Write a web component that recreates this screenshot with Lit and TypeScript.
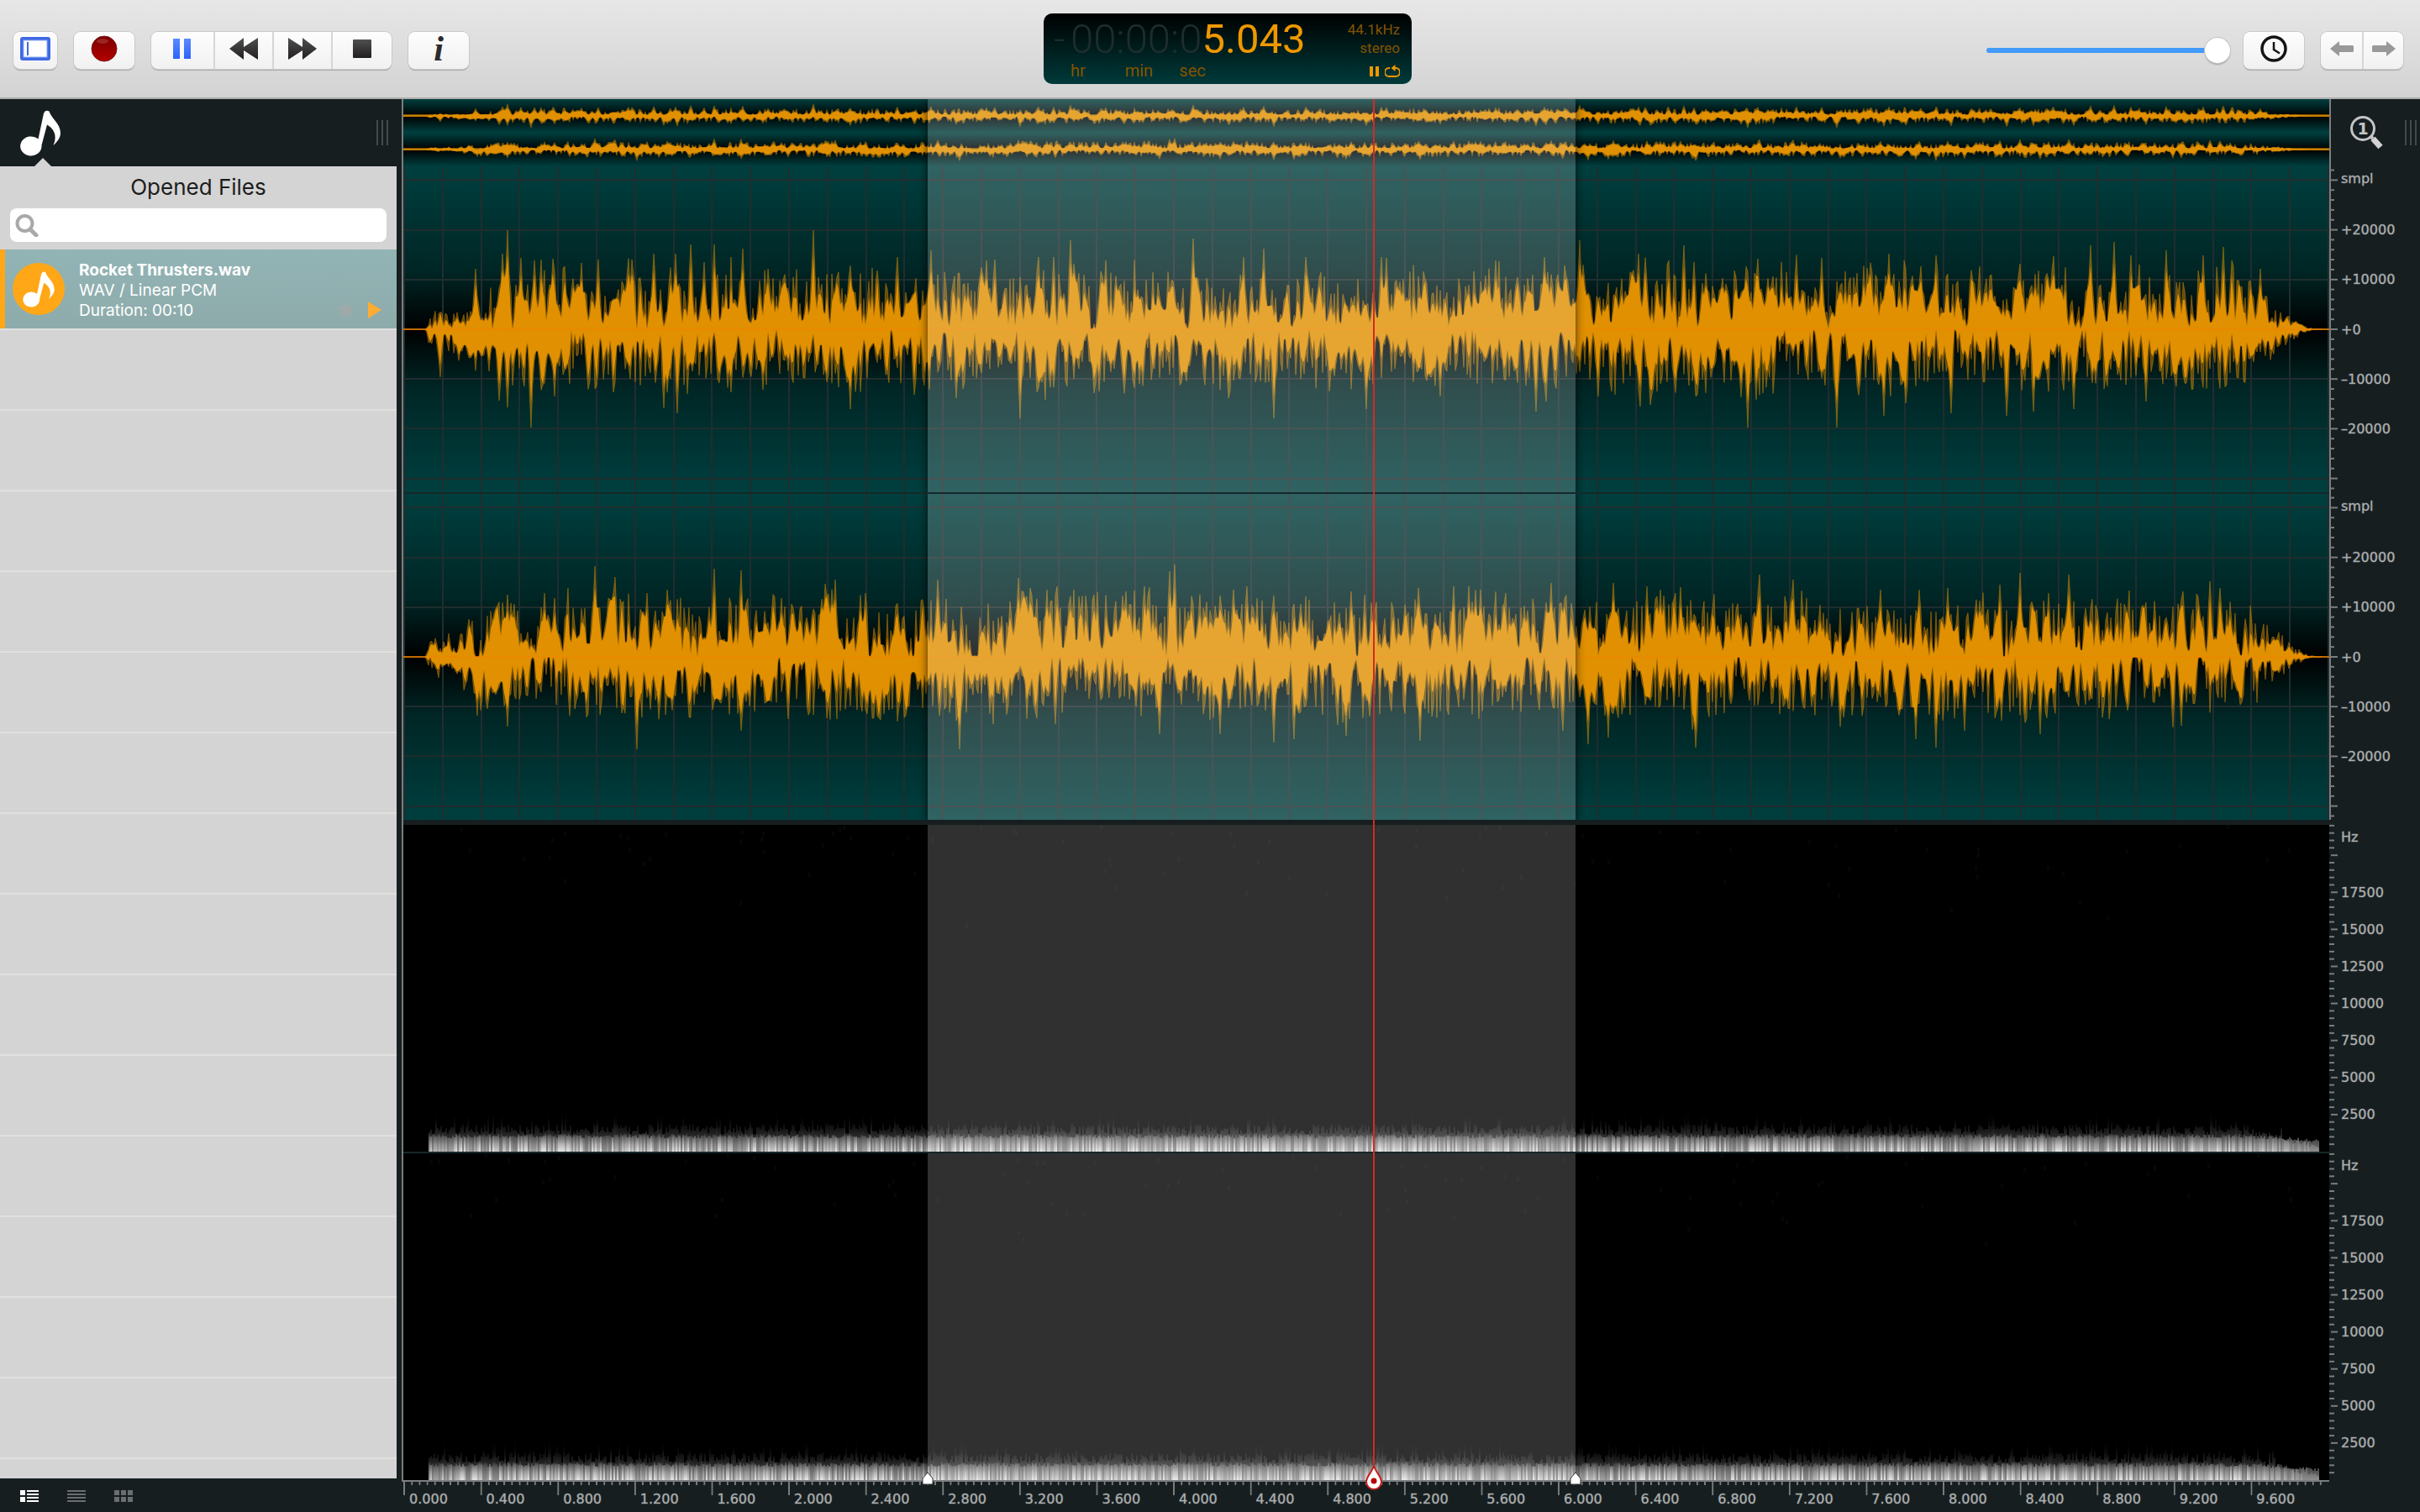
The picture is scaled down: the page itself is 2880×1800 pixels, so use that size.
import { LitElement, html, svg, css } from "lit";
import { customElement, property } from "lit/decorators.js";

type Peak = [number, number];

const WIDTH = 2292;
const DURATION = 10.009;
const MAX_SAMPLE = 32768;
const NYQUIST = 22050;

const FIRST_TOP: Peak[] = [
  [85, 72], [117, 90], [123, 118], [139, 85], [155, 82], [163, 83], [177, 84], [191, 75], [211, 79], [231, 83],
  [271, 83], [298, 90], [323, 90], [341, 101], [357, 80], [369, 101], [403, 96], [433, 72], [487, 118], [587, 86],
  [627, 94], [693, 82], [703, 83], [755, 86], [773, 86], [793, 106], [836, 82], [939, 108], [999, 86], [1023, 96],
  [1073, 86], [1163, 86], [1169, 85], [1299, 82], [1358, 86], [1399, 106], [1469, 90], [1505, 82], [1523, 100],
  [1535, 80], [1611, 84], [1687, 85], [1768, 90], [1824, 88], [1923, 78], [2008, 100], [2035, 104], [2055, 88],
  [2097, 94], [2141, 88], [2165, 98], [2176, 82], [2209, 72],
];
const FIRST_BOTTOM: Peak[] = [
  [43, 57], [113, 85], [123, 93], [151, 117], [179, 80], [249, 75], [309, 94], [325, 100], [389, 75], [428, 72],
  [531, 95], [607, 78], [657, 82], [733, 106], [821, 76], [981, 82], [1035, 106], [1145, 95], [1233, 80], [1347, 98],
  [1359, 86], [1422, 80], [1471, 92], [1483, 90], [1537, 80], [1599, 117], [1609, 84], [1705, 117], [1761, 103],
  [1787, 88], [1842, 100], [1907, 103], [1939, 98], [1987, 95], [2073, 86],
];
const SECOND_TOP: Peak[] = [
  [123, 74], [179, 70], [227, 108], [251, 95], [290, 76], [313, 80], [370, 105], [402, 103], [449, 70], [501, 87],
  [513, 92], [549, 76], [635, 92], [732, 94], [745, 82], [765, 80], [777, 84], [821, 74], [881, 84], [911, 102],
  [917, 110], [971, 73], [1003, 84], [1035, 73], [1127, 78], [1207, 82], [1250, 84], [1281, 80], [1365, 88],
  [1439, 88], [1479, 84], [1496, 80], [1519, 83], [1613, 98], [1653, 92], [1757, 80], [1803, 80], [1837, 82],
  [1899, 86], [1923, 100], [1958, 76], [1981, 98], [2117, 78], [2149, 90], [2161, 82],
];
const SECOND_BOTTOM: Peak[] = [
  [87, 70], [124, 83], [198, 70], [277, 110], [340, 72], [402, 88], [457, 74], [563, 70], [661, 110], [775, 80],
  [899, 92], [971, 92], [1035, 102], [1059, 98], [1121, 94], [1209, 100], [1379, 88], [1410, 104], [1433, 96],
  [1537, 108], [1799, 98], [1823, 108], [1857, 88], [1902, 76], [1947, 92], [2105, 84], [2115, 82],
];

function randomSource(seed: number) {
  let state = seed;
  return () => {
    state = (state * 1664525 + 1013904223) >>> 0;
    return state / 4294967296;
  };
}

const ENVELOPE: Peak[] = [
  [0, 0], [27, 0], [30, 0.35], [60, 0.42], [90, 0.8], [120, 1], [2190, 1], [2212, 0.7], [2232, 0.4], [2248, 0.22],
  [2262, 0.06], [2274, 0.01], [WIDTH, 0],
];

function envelopeAt(x: number) {
  for (let i = 1; i < ENVELOPE.length; i++) {
    const [x1, y1] = ENVELOPE[i];
    if (x <= x1) {
      const [x0, y0] = ENVELOPE[i - 1];
      return y0 + ((x - x0) / (x1 - x0)) * (y1 - y0);
    }
  }
  return 0;
}

const STEP = 2;
const COUNT = WIDTH / STEP;

function sideLevels(seed: number, peaks: Peak[]) {
  const random = randomSource(seed);
  const levels: number[] = [];
  let drift = 0;
  for (let i = 0; i <= COUNT; i++) {
    drift = drift * 0.85 + (random() - 0.5) * 14;
    const crest = random() < 0.42;
    const base = crest ? 40 + random() * 32 : 6 + random() * 36;
    levels.push(Math.max(0, base + drift) * envelopeAt(i * STEP));
  }
  for (const [x, height] of peaks) {
    const i = Math.round(x / STEP);
    levels[i] = height;
    levels[i - 1] = Math.max(levels[i - 1], height * 0.62);
    levels[i + 1] = Math.max(levels[i + 1], height * 0.56);
  }
  return levels;
}

function coreLevels(levels: number[]) {
  return levels.map((v, i) => {
    const low = Math.min(levels[i - 1] ?? v, v, levels[i + 1] ?? v);
    return low + (v - low) * 0.45;
  });
}

function outline(top: number[], bottom: number[], middle: number, scale: number) {
  const upper = top.map((v, i) => `${i * STEP} ${(middle - v * scale).toFixed(1)}`);
  const lower = bottom.map((v, i) => `${i * STEP} ${(middle + v * scale).toFixed(1)}`).reverse();
  return `M${upper.join("L")}L${lower.join("L")}Z`;
}

const CHANNELS = [
  { top: sideLevels(11, FIRST_TOP), bottom: sideLevels(29, FIRST_BOTTOM) },
  { top: sideLevels(47, SECOND_TOP), bottom: sideLevels(83, SECOND_BOTTOM) },
].map((c) => ({ ...c, coreTop: coreLevels(c.top), coreBottom: coreLevels(c.bottom) }));

const percent = (n: number) => `${(n * 100).toFixed(3)}%`;
const range = (n: number) => Array.from({ length: n }, (_, i) => i);

const noteShape = svg`<path d="M28 4Q30 -1 34.500 1.500C37 10 48 16 48 27.500C48 33 44 38 39.500 42C42 36 42 32 41 28C39 22 35 19.500 32 17.500L25.500 42A12.700 11.500 0 1 1 21.500 34.500Z"/>`;

@customElement("wave-lane")
export class WaveLane extends LitElement {
  @property({ type: Number }) channel = 0;

  static styles = css`
    :host { display: block; min-height: 0; background: linear-gradient(#003f3f, #002625 32%, #000 50%, #002625 68%, #003f3f); }
    .plot { display: block; width: 100%; height: 100%; }
    .grid { fill: #202d2e; }
    .spikes { fill: #e09000; fill-opacity: 0.45; stroke: #e09000; stroke-opacity: 0.4; stroke-width: 1; }
    .core { fill: #e09000; }
    .zero { fill: #ff7a00; fill-opacity: 0.3; }
    .rest { fill: #8a4a00; }
  `;

  render() {
    const c = CHANNELS[this.channel];
    return html`<svg class="plot" viewBox="0 0 2292 388" preserveAspectRatio="none" aria-label="Waveform">
      ${range(51).map((i) => svg`<rect class="grid" x=${Math.round((i * 0.2 * WIDTH) / DURATION)} y="0" width="2" height="388"/>`)}
      ${[-3, -2, -1, 1, 2, 3].map((i) => svg`<rect class="grid" x="0" y=${Math.round(193 - (i * 10000 * 194) / MAX_SAMPLE)} width="2292" height="2"/>`)}
      <rect class="rest" x="0" y="193" width="2292" height="2"></rect>
      <path class="spikes" d=${outline(c.top, c.bottom, 194, 1)}></path>
      <path class="core" d=${outline(c.coreTop, c.coreBottom, 194, 1)}></path>
      <rect class="zero" x="0" y="193" width="2292" height="2"></rect>
    </svg>`;
  }
}

@customElement("wave-overview")
export class WaveOverview extends LitElement {
  static styles = css`
    :host { display: block; min-height: 0; background: linear-gradient(#003f3f, #000 25%, #003f3f 50%, #000 75%, #003f3f); }
    .plot { display: block; width: 100%; height: 100%; }
    .rest { fill: #7d5000; }
    .spikes { fill: #e09000; fill-opacity: 0.55; }
    .core { fill: #e09000; stroke: #e09000; stroke-width: 1; }
  `;

  render() {
    return html`<svg class="plot" viewBox="0 0 2292 80" preserveAspectRatio="none" aria-label="Overview">
      ${CHANNELS.map((c, i) => {
        const middle = 20 + i * 40;
        return svg`<rect class="rest" x="0" y=${middle - 2} width="2292" height="3"/>
          <path class="spikes" d=${outline(c.top, c.bottom, middle, 0.13)}/>
          <path class="core" d=${outline(c.coreTop, c.coreBottom, middle, 0.1)}/>`;
      })}
    </svg>`;
  }
}

@customElement("spectrum-lane")
export class SpectrumLane extends LitElement {
  @property({ type: Number }) seed = 1;

  static styles = css`
    :host { display: block; min-height: 0; background: #000; }
    .plot { display: block; width: 100%; height: 100%; }
    .speck { fill: #070707; }
  `;

  render() {
    const random = randomSource(this.seed);
    const tiers = [0.5, 0.62, 0.74, 0.86, 1];
    const bands = tiers.map(() => "");
    let haze = "";
    let wisps = "";
    for (let x = 31; x < 2280; x += 2) {
      const fade = x > 2190 ? Math.max(0.15, 1 - (x - 2190) / 110) : 1;
      const tier = Math.min(4, Math.floor(random() * 5 * fade));
      const height = (16 + random() * 6) * (0.6 + 0.4 * fade);
      bands[tier] += `M${x} 389V${(389 - height).toFixed(1)}`;
      haze += `M${x} 389V${(389 - (20 + random() * 13) * fade).toFixed(1)}`;
      if (random() < 0.1) wisps += `M${x} 389V${(389 - (34 + random() * 18) * fade).toFixed(1)}`;
    }
    return html`<svg class="plot" viewBox="0 0 2292 389" preserveAspectRatio="none" aria-label="Spectrogram">
      <defs>
        <linearGradient id="band" gradientUnits="userSpaceOnUse" x1="0" y1="389" x2="0" y2="367">
          <stop offset="0" stop-color="#e6e6e6"></stop>
          <stop offset="0.4" stop-color="#b4b4b4"></stop>
          <stop offset="0.8" stop-color="#6a6a6a"></stop>
          <stop offset="1" stop-color="#2a2a2a"></stop>
        </linearGradient>
        <linearGradient id="haze" gradientUnits="userSpaceOnUse" x1="0" y1="389" x2="0" y2="340">
          <stop offset="0.3" stop-color="#343434"></stop>
          <stop offset="1" stop-color="#000" stop-opacity="0"></stop>
        </linearGradient>
      </defs>
      ${range(90).map(() => svg`<rect class="speck" x=${Math.round(31 + random() * 2230)} y=${Math.round(random() * random() * 130)} width="3" height="5"/>`)}
      <path d=${wisps} stroke="url(#haze)" stroke-width="2"></path>
      <path d=${haze} stroke="url(#haze)" stroke-width="2"></path>
      ${bands.map((d, i) => svg`<path d=${d} stroke="url(#band)" stroke-width="2" opacity=${tiers[i]}/>`)}
    </svg>`;
  }
}

@customElement("level-axis")
export class LevelAxis extends LitElement {
  @property() unit = "smpl";

  static styles = css`
    :host { display: block; min-height: 0; }
    :host([unit="smpl"]) { box-shadow: inset 2px 0 #7a7d7e; }
    .scale { display: block; width: 100%; height: 100%; overflow: visible; font: 16px "DejaVu Sans", sans-serif; }
    .tick { stroke: #7a7d7e; stroke-width: 2; }
    .label { fill: #aeb0b0; stroke: #aeb0b0; stroke-width: 1; stroke-opacity: 0.4; dominant-baseline: central; }
  `;

  private samples() {
    return range(33).map((n) => {
      const value = (n - 16) * 2000;
      const y = percent(0.5 - value / MAX_SAMPLE / 2);
      const major = value % 10000 === 0;
      const named = major && Math.abs(value) < 30000;
      const text = value < 0 ? `–${-value}` : `+${value}`;
      return svg`<line class="tick" x1="2" x2=${major ? 10 : 6} y1=${y} y2=${y}/>
        ${named ? svg`<text class="label" x="14" y=${y}>${text}</text>` : ""}`;
    });
  }

  private hertz() {
    return range(44).map((n) => {
      const value = (n + 1) * 500;
      const y = percent(1 - value / NYQUIST);
      const major = value % 2500 === 0;
      return svg`<line class="tick" x1=${major ? 2 : 0} x2=${major ? 10 : 6} y1=${y} y2=${y}/>
        ${major && value < 20000 ? svg`<text class="label" x="14" y=${y}>${value}</text>` : ""}`;
    });
  }

  render() {
    return html`<svg class="scale">
      ${this.unit === "Hz" ? this.hertz() : this.samples()}
      <text class="label" x="14" y="14">${this.unit}</text>
    </svg>`;
  }
}

@customElement("time-axis")
export class TimeAxis extends LitElement {
  static styles = css`
    :host { display: block; height: 100%; min-height: 0; }
    .scale { display: block; width: 100%; height: 100%; font: 16px "DejaVu Sans", sans-serif; }
    .tick { fill: #7a7d7e; }
    .label { fill: #aeb0b0; stroke: #aeb0b0; stroke-width: 1; stroke-opacity: 0.4; dominant-baseline: central; }
  `;

  render() {
    return html`<svg class="scale">
      ${range(250).map((n) => {
        const time = n * 0.04;
        const major = n % 10 === 0;
        return svg`<svg x=${percent(time / DURATION)} width="80" height="36">
          <rect class="tick" width="2" height=${major ? 16 : 4}/>
          ${major ? svg`<text class="label" x="7" y="20">${time.toFixed(3)}</text>` : ""}
        </svg>`;
      })}
    </svg>`;
  }
}

@customElement("app-root")
export class AppRoot extends LitElement {
  static styles = css`
    :host {
      display: grid;
      grid-template-rows: 118px minmax(0, 1fr);
      height: 100vh;
      background: #161e20;
      font-family: Inter, "Liberation Sans", sans-serif;
      color: #1d1d1d;
    }
    * { box-sizing: border-box; }
    button { margin: 0; padding: 0; border: 0; background: none; font: inherit; color: inherit; }
    svg { display: block; }

    .toolbar {
      display: flex; align-items: center; justify-content: space-between;
      padding: 4px 20px 0 16px;
      background: linear-gradient(#e7e7e7, #d3d3d3);
      border-bottom: 2px solid #adadad;
    }
    .tools { display: flex; align-items: center; gap: 20px; }
    .tools.end { gap: 16px; }
    .tools.history { gap: 20px; }
    .group {
      display: flex; height: 44px; border-radius: 8px;
      background: linear-gradient(#fdfdfd, #f1f1f1);
      box-shadow: 0 0 0 1px #c9c9c9, 0 2px 1px #a9a9a9;
    }
    .tool { display: flex; align-items: center; justify-content: center; width: 72px; padding-bottom: 4px; }
    .tool + .tool { border-left: 2px solid #d6d6d6; }
    .tool.wide { width: 74px; }
    .tool.skip { width: 70px; }
    .tool.small { width: 52px; }
    .tool.arrow { width: 49px; }
    .info { font: italic bold 42px/40px "Liberation Serif", serif; color: #2c2a2b; }

    .lcd {
      display: flex; justify-content: space-between; height: 84px; margin-bottom: 4px; width: 438px;
      padding: 4px 14px 0 12px; border-radius: 10px;
      background: linear-gradient(#000, #003a3a);
      color: #835400; font-family: Roboto, sans-serif;
    }
    .clock { display: grid; grid-template-columns: 20px repeat(5, auto); align-content: start; font-size: 20px; line-height: 20px; }
    .digits { font-size: 49px; font-weight: 300; line-height: 54px; color: #1d2d2e; }
    .digits .lit { color: #ee9800; font-weight: 400; }
    .unit { grid-row: 2; }
    .format { display: flex; flex-direction: column; align-items: flex-end; padding-top: 4px; font-size: 17px; line-height: 22px; }
    .status { display: flex; align-items: center; gap: 6px; margin-top: 9px; }

    .volume { appearance: none; width: 290px; height: 32px; margin: 0; background: none; }
    .volume::-webkit-slider-runnable-track { height: 6px; border-radius: 3px; background: #429bf9; }
    .volume::-webkit-slider-thumb {
      appearance: none; width: 30px; height: 30px; margin-top: -12px; border-radius: 50%;
      background: #fff; box-shadow: 0 0 0 1px #c4c4c4, 0 2px 2px #9b9b9b;
    }

    .body { display: grid; grid-template-columns: 478px minmax(0, 1fr); min-height: 0; }
    .sidebar { display: grid; grid-template-rows: 80px auto minmax(0, 1fr) 40px; padding-right: 6px; min-height: 0; }
    .tabs { display: flex; align-items: center; justify-content: space-between; padding: 0 10px 0 24px; }
    .tab { position: relative; height: 80px; fill: #fff; }
    .tab::after {
      content: ""; position: absolute; left: 17px; bottom: 0;
      border: 10px solid transparent; border-top-width: 0; border-bottom-color: #d4d4d4;
    }
    .grip { width: 14px; height: 30px; background: repeating-linear-gradient(90deg, #434a4b 0 2px, transparent 2px 6px); }
    .finder { display: grid; grid-template-rows: 50px 40px; padding: 0 12px 9px; background: #d4d4d4; }
    .title { margin: 0; font-size: 26px; font-weight: 400; line-height: 50px; text-align: center; }
    .search { display: flex; align-items: center; gap: 8px; padding-left: 6px; border-radius: 8px; background: #fff; }
    .query { flex: 1; min-width: 0; height: 36px; border: 0; outline: 0; background: none; font: 22px Inter, sans-serif; }
    .files {
      margin: 0; padding: 0; list-style: none; min-height: 0; overflow: hidden;
      background: repeating-linear-gradient(#d4d4d4 0 94px, #e0e0e0 94px 96px);
    }
    .file {
      display: flex; align-items: center; gap: 17px; height: 94px; padding: 0 18px 0 9px;
      border-left: 6px solid #ffa716; background: linear-gradient(#92b4b5, #8eabab); color: #fff;
      font-size: 19px; line-height: 24px;
    }
    .badge { display: grid; place-items: center; width: 62px; height: 62px; border-radius: 50%; background: #ffa716; fill: #fff; }
    .facts { flex: 1; padding-top: 4px; }
    .facts > div, .facts > strong { display: block; }
    .marks { display: flex; align-self: flex-end; align-items: center; gap: 15px; padding-bottom: 12px; }
    .views { display: flex; align-items: center; gap: 34px; padding: 2px 24px 0; fill: #6a6e6f; }
    .views .on { fill: #fff; }

    .editor {
      display: grid; min-height: 0;
      grid-template-columns: 2px minmax(0, 1fr) 108px;
      grid-template-rows: 80px minmax(0, 388fr) 2px minmax(0, 388fr) 6px minmax(0, 389fr) 2px minmax(0, 389fr) 38px;
    }
    .edge { grid-column: 1; grid-row: 1 / 9; background: #7a7d7e; }
    .editor > wave-overview, .editor > wave-lane, .editor > spectrum-lane { grid-column: 2; }
    .editor > level-axis { grid-column: 3; }
    .r1 { grid-row: 1; } .r2 { grid-row: 2; } .r4 { grid-row: 4; } .r6 { grid-row: 6; } .r8 { grid-row: 8; }
    .divider { z-index: 2; grid-column: 2; background: #16282a; }
    .divider.first { grid-row: 3; }
    .divider.middle { grid-row: 5; background: #161e20; }
    .divider.last { grid-row: 7; }
    .joint { grid-column: 3; grid-row: 3; width: 2px; background: #7a7d7e; }
    .corner {
      grid-column: 3; display: flex; align-items: center; justify-content: space-between;
      padding-left: 22px; padding-right: 4px; border-left: 2px solid #7a7d7e;
    }
    .ruler { grid-column: 1 / 3; grid-row: 9; height: 38px; padding-left: 2px; border-top: 2px solid #7a7d7e; min-width: 0; }
    .zoom-digit { font: bold 19px "DejaVu Sans", sans-serif; }
    .range { z-index: 1; grid-column: 2; grid-row: 1 / 9; position: relative; }
    .cursor { z-index: 3; grid-column: 2; grid-row: 1 / 9; position: relative; pointer-events: none; }
    .selection {
      position: absolute; top: 0; bottom: 0; background: rgba(255, 255, 255, 0.19);
      box-shadow: 0 0 10px rgba(0, 0, 0, 0.7); clip-path: inset(0 -12px);
    }
    .playhead { position: absolute; top: 0; bottom: 0; width: 2px; background: #d22a26; }
    .drop { position: absolute; left: -10px; bottom: -12px; }
    .handle { position: absolute; bottom: -6px; margin-left: -8px; }
  `;

  private toolbar() {
    return html`<header class="toolbar">
      <div class="tools">
        <div class="group"><button class="tool small" aria-label="Sidebar">
          <svg width="36" height="28"><rect x="2" y="2" width="32" height="24" rx="1" fill="#fff" stroke="#3f68e4" stroke-width="4"/><rect x="4" y="4" width="28" height="20" fill="none" stroke="#8fabf5" stroke-width="1"/><path d="M9 6V22" stroke="#3f68e4" stroke-width="2"/></svg>
        </button></div>
        <div class="group"><button class="tool" aria-label="Record">
          <svg width="32" height="32"><defs><linearGradient id="rec" x1="0" y1="0" x2="0" y2="1"><stop offset="0" stop-color="#7a0000"/><stop offset="1" stop-color="#b40000"/></linearGradient></defs><circle cx="16" cy="16" r="15" fill="url(#rec)" stroke="#7d1a1a" stroke-width="1"/><ellipse cx="14" cy="7" rx="7" ry="3" fill="#a83c3c" opacity="0.600"/></svg>
        </button></div>
        <div class="group">
          <button class="tool wide" aria-label="Pause"><svg width="22" height="26"><defs><linearGradient id="pz" x1="0" y1="0" x2="0" y2="1"><stop offset="0" stop-color="#5b8bff"/><stop offset="1" stop-color="#2b62fb"/></linearGradient></defs><path d="M0 1H8V25H0ZM13 1H21V25H13Z" fill="url(#pz)"/></svg></button>
          <button class="tool skip" aria-label="Rewind"><svg width="34" height="26"><defs><linearGradient id="dk" x1="0" y1="0" x2="0" y2="1"><stop offset="0" stop-color="#505050"/><stop offset="1" stop-color="#211e1f"/></linearGradient></defs><path d="M0 13L17 0V11L34 0V26L17 15V26Z" fill="url(#dk)"/></svg></button>
          <button class="tool skip" aria-label="Forward"><svg width="34" height="26"><path d="M34 13L17 0V11L0 0V26L17 15V26Z" fill="url(#dk)"/></svg></button>
          <button class="tool" aria-label="Stop"><svg width="22" height="22"><rect width="22" height="22" rx="1" fill="url(#dk)"/></svg></button>
        </div>
        <div class="group"><button class="tool info" aria-label="Information">i</button></div>
      </div>
      <div class="lcd">
        <div class="clock">
          <span class="digits">-</span><span class="digits">00</span><span class="digits">:</span><span class="digits">00</span><span class="digits">:</span><span class="digits">0<span class="lit">5.043</span></span>
          <span class="unit" style="grid-column:2">hr</span><span class="unit" style="grid-column:4">min</span><span class="unit" style="grid-column:6">sec</span>
        </div>
        <div class="format">
          <span>44.1kHz</span><span>stereo</span>
          <span class="status">
            <svg width="12" height="12" fill="#ee9800"><path d="M0 0H4V12H0ZM7 0H11V12H7Z"/></svg>
            <svg width="18" height="16" fill="none" stroke="#ee9800" stroke-width="2"><path d="M6 4H5A4.500 4.500 0 0 0 5 14H13A4.500 4.500 0 0 0 13 4H11"/><path d="M12.500 0V8L7.500 4Z" fill="#ee9800" stroke="none"/></svg>
          </span>
        </div>
      </div>
      <div class="tools end">
        <input class="volume" type="range" min="0" max="100" value="100" aria-label="Volume" />
        <div class="tools history">
          <div class="group"><button class="tool" aria-label="History">
            <svg width="32" height="32" fill="none" stroke="#141414"><circle cx="16" cy="16" r="14" stroke-width="3.500"/><path d="M16 8V17L23 21.500" stroke-width="2.500"/></svg>
          </button></div>
          <div class="group">
            <button class="tool arrow" aria-label="Back"><svg width="28" height="18" fill="#999"><path d="M0 9L11 0V5H27L28 6V12L27 13H11V18Z"/></svg></button>
            <button class="tool arrow" aria-label="Forward"><svg width="28" height="18" fill="#999"><path d="M28 9L17 0V5H1L0 6V12L1 13H17V18Z"/></svg></button>
          </div>
        </div>
      </div>
    </header>`;
  }

  private sidebar() {
    return html`<aside class="sidebar">
      <div class="tabs">
        <button class="tab" aria-label="Opened files"><svg width="48" height="55">${noteShape}</svg></button>
        <div class="grip"></div>
      </div>
      <div class="finder">
        <h1 class="title">Opened Files</h1>
        <label class="search">
          <svg width="28" height="28" fill="none" stroke="#a9a9a9"><circle cx="11.500" cy="12" r="9" stroke-width="4"/><path d="M18 19L25 26" stroke-width="5" stroke-linecap="round"/></svg>
          <input class="query" type="text" aria-label="Search files" />
        </label>
      </div>
      <ul class="files">
        <li class="file">
          <span class="badge"><svg width="38" height="43" viewBox="0 0 48 55">${noteShape}</svg></span>
          <div class="facts"><strong>Rocket Thrusters.wav</strong><div>WAV / Linear PCM</div><div>Duration: 00:10</div></div>
          <div class="marks">
            <button aria-label="Favorite"><svg width="22" height="21" fill="#a0a9a9"><path d="M11 0L14 7.500L22 8L16 13L18 21L11 16.500L4 21L6 13L0 8L8 7.500Z"/></svg></button>
            <button aria-label="Play"><svg width="16" height="20" fill="#ffac33"><path d="M0 0L16 10L0 20Z"/></svg></button>
          </div>
        </li>
      </ul>
      <nav class="views">
        <button class="on" aria-label="Detailed list"><svg width="22" height="14"><path d="M0 0H6V6H0ZM8 0H22V2H8ZM8 4H22V6H8ZM0 8H6V14H0ZM8 8H22V10H8ZM8 12H22V14H8Z"/></svg></button>
        <button aria-label="Compact list"><svg width="22" height="14"><path d="M0 0H22V2H0ZM0 4H22V6H0ZM0 8H22V10H0ZM0 12H22V14H0Z"/></svg></button>
        <button aria-label="Grid"><svg width="22" height="14"><path d="M0 0H6V6H0ZM8 0H14V6H8ZM16 0H22V6H16ZM0 8H6V14H0ZM8 8H14V14H8ZM16 8H22V14H16Z"/></svg></button>
      </nav>
    </aside>`;
  }

  private handle(time: number) {
    return html`<svg class="handle" style="left:${percent(time / DURATION)}" width="16" height="16"><path d="M8 1L14 8V15H2V8Z" fill="#fff" stroke="#333" stroke-width="1"/></svg>`;
  }

  private editor() {
    const start = 2.725;
    const end = 6.094;
    const now = 5.041;
    return html`<main class="editor">
      <div class="edge"></div>
      <wave-overview class="r1"></wave-overview>
      <div class="corner r1">
        <button aria-label="Actual size">
          <svg width="42" height="42"><circle cx="16" cy="16" r="13.500" fill="none" stroke="#c4c4c4" stroke-width="3"/><path d="M25 25L28 28" stroke="#c4c4c4" stroke-width="4"/><path d="M28 28L37 38" stroke="#d2d2d2" stroke-width="7"/><text class="zoom-digit" x="16" y="23" text-anchor="middle" fill="#c4c4c4">1</text></svg>
        </button>
        <div class="grip"></div>
      </div>
      <wave-lane class="r2" .channel=${0}></wave-lane>
      <level-axis class="r2" unit="smpl"></level-axis>
      <div class="joint"></div>
      <wave-lane class="r4" .channel=${1}></wave-lane>
      <level-axis class="r4" unit="smpl"></level-axis>
      <spectrum-lane class="r6" .seed=${5}></spectrum-lane>
      <level-axis class="r6" unit="Hz"></level-axis>
      <spectrum-lane class="r8" .seed=${17}></spectrum-lane>
      <level-axis class="r8" unit="Hz"></level-axis>
      <div class="divider first"></div>
      <div class="divider middle"></div>
      <div class="divider last"></div>
      <div class="ruler"><time-axis></time-axis></div>
      <div class="range"><div class="selection" style="left:${percent(start / DURATION)};width:${percent((end - start) / DURATION)}"></div></div>
      <div class="cursor">
        ${this.handle(start)}${this.handle(end)}
        <div class="playhead" style="left:${percent(now / DURATION)}">
          <svg class="drop" width="22" height="30"><path d="M11 1C13 8 20 14 20 20A9 9 0 0 1 2 20C2 14 9 8 11 1Z" fill="#fff" stroke="#c4201e" stroke-width="2"/><circle cx="11" cy="19" r="3.500" fill="#b80000"/></svg>
        </div>
      </div>
    </main>`;
  }

  render() {
    return html`${this.toolbar()}<div class="body">${this.sidebar()}${this.editor()}</div>`;
  }
}
